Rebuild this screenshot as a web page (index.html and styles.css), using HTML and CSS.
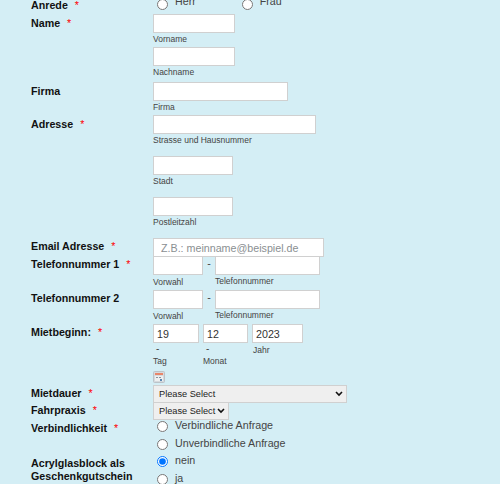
FILE: index.html
```html
<!DOCTYPE html>
<html lang="de">
<head>
    <meta charset="UTF-8">
    <title>Anfrage</title>
    <link rel="stylesheet" href="styles.css">
</head>
<body>
    <form class="form">
        <div class="row row-anrede">
            <div class="label">Anrede <span class="req">*</span></div>
            <div class="field radio-inline">
                <label class="radio"><input type="radio" name="anrede"><span>Herr</span></label>
                <label class="radio"><input type="radio" name="anrede"><span>Frau</span></label>
            </div>
        </div>

        <div class="row row-name">
            <div class="label">Name <span class="req">*</span></div>
            <div class="field">
                <div class="sub"><input type="text" class="text w82"><small>Vorname</small></div>
                <div class="sub"><input type="text" class="text w82"><small>Nachname</small></div>
            </div>
        </div>

        <div class="row row-firma">
            <div class="label">Firma</div>
            <div class="field">
                <div class="sub"><input type="text" class="text w135"><small>Firma</small></div>
            </div>
        </div>

        <div class="row row-adresse">
            <div class="label">Adresse <span class="req">*</span></div>
            <div class="field">
                <div class="sub addr"><input type="text" class="text w163"><small>Strasse und Hausnummer</small></div>
                <div class="sub addr"><input type="text" class="text w80"><small>Stadt</small></div>
                <div class="sub addr"><input type="text" class="text w80"><small>Postleitzahl</small></div>
            </div>
        </div>

        <div class="row row-email">
            <div class="label">Email Adresse <span class="req">*</span></div>
            <div class="field">
                <input type="text" class="text w171 email" placeholder="Z.B.: meinname@beispiel.de">
            </div>
        </div>

        <div class="row row-tel">
            <div class="label">Telefonnummer 1 <span class="req">*</span></div>
            <div class="field phone">
                <div class="sub"><input type="text" class="text w50"><small>Vorwahl</small></div>
                <div class="dash">-</div>
                <div class="sub sub-up"><input type="text" class="text w105"><small>Telefonnummer</small></div>
            </div>
        </div>

        <div class="row row-tel">
            <div class="label">Telefonnummer 2</div>
            <div class="field phone">
                <div class="sub"><input type="text" class="text w50"><small>Vorwahl</small></div>
                <div class="dash">-</div>
                <div class="sub sub-up"><input type="text" class="text w105"><small>Telefonnummer</small></div>
            </div>
        </div>

        <div class="row row-date">
            <div class="label">Mietbeginn: <span class="req">*</span></div>
            <div class="field">
                <div class="date">
                    <div class="date-part">
                        <input type="text" class="text w46" value="19">
                        <div class="date-dash">-</div>
                        <small>Tag</small>
                    </div>
                    <div class="date-part">
                        <input type="text" class="text w45" value="12">
                        <div class="date-dash">-</div>
                        <small>Monat</small>
                    </div>
                    <div class="date-part">
                        <input type="text" class="text w51" value="2023">
                        <small class="jahr">Jahr</small>
                    </div>
                </div>
                <svg class="cal" viewBox="0 0 12 12" width="12" height="12">
                    <rect x="0.5" y="0.5" width="11" height="11" rx="1" fill="#d5dade" stroke="#bcc3c8"/>
                    <rect x="2" y="2" width="8" height="2" fill="#e8866a"/>
                    <rect x="2" y="5" width="8" height="5" fill="#eef0f1"/>
                    <rect x="3" y="6" width="2" height="1" fill="#8a949c"/>
                    <rect x="6" y="6" width="2" height="1" fill="#8a949c"/>
                    <rect x="7" y="8" width="2" height="2" fill="#5a86b0"/>
                </svg>
            </div>
        </div>

        <div class="row row-select">
            <div class="label">Mietdauer <span class="req">*</span></div>
            <div class="field">
                <select class="select w194"><option>Please Select</option></select>
            </div>
        </div>

        <div class="row row-select">
            <div class="label">Fahrpraxis <span class="req">*</span></div>
            <div class="field">
                <select class="select w76"><option>Please Select</option></select>
            </div>
        </div>

        <div class="row row-radios">
            <div class="label">Verbindlichkeit <span class="req">*</span></div>
            <div class="field radio-stack">
                <label class="radio"><input type="radio" name="art"><span>Verbindliche Anfrage</span></label>
                <label class="radio"><input type="radio" name="art"><span>Unverbindliche Anfrage</span></label>
            </div>
        </div>

        <div class="row row-radios">
            <div class="label">Acrylglasblock als Geschenkgutschein (46.- CHF)</div>
            <div class="field radio-stack">
                <label class="radio"><input type="radio" name="block" checked><span>nein</span></label>
                <label class="radio"><input type="radio" name="block"><span>ja</span></label>
            </div>
        </div>
    </form>
</body>
</html>
```

FILE: styles.css
```css
html, body {
    height: 100%;
    overflow: hidden;
}

body {
    background-color: #d4eef5;
    color: #444;
    font-family: 'Liberation Sans', Arial, sans-serif;
    margin: 0;
}

.form {
    margin-top: -4px;
    padding-left: 31px;
}

.row {
    display: flex;
}

.label {
    color: #111;
    flex: 0 0 122px;
    font-size: 10.7px;
    font-weight: bold;
    line-height: 13px;
    padding-top: 2px;
    width: 122px;
}

.req {
    color: #f00;
    font-weight: normal;
    margin-left: 4px;
}

.field {
    flex: 1;
}

small {
    display: block;
    font-size: 8.5px;
    line-height: 11px;
}

.text {
    background: #fff;
    border: 1px solid #d0d0d0;
    box-sizing: border-box;
    color: #333;
    display: block;
    font-family: inherit;
    font-size: 10.7px;
    height: 19px;
    margin: 0;
    padding: 0 3px;
}

.w45 { width: 45px; }
.w46 { width: 46px; }
.w50 { width: 50px; }
.w51 { width: 51px; }
.w80 { width: 80px; }
.w82 { width: 82px; }
.w105 { width: 105px; }
.w135 { width: 135px; }
.w163 { width: 163px; }
.w171 { width: 171px; }
.w194 { width: 194px; }
.w76 { width: 76px; }

.email {
    padding-left: 7px;
}

.email::placeholder {
    color: #8a8f92;
    opacity: 1;
}

/* rows */
.row-anrede {
    height: 18px;
}

.row-anrede .label {
    padding-top: 3px;
}

.row-name {
    height: 68px;
}

.row-name .label,
.row-firma .label,
.row-adresse .label,
.row-radios .label {
    padding-top: 3px;
}

.row-name .sub {
    height: 33px;
}

.row-firma {
    height: 33px;
}

.row-adresse {
    height: 123px;
}

.addr {
    height: 41px;
}

.sub small {
    margin-top: 1px;
}

.row-email {
    height: 18px;
}

.row-tel {
    height: 34px;
}

.phone {
    display: flex;
}

.phone .sub small {
    margin-top: 2px;
}

.phone .sub-up small {
    margin-top: 1px;
}

.dash {
    font-size: 10.7px;
    line-height: 14px;
    text-align: center;
    width: 12px;
}

.row-date {
    height: 61px;
}

.date {
    display: flex;
    gap: 4px;
}

.date-dash {
    font-size: 10px;
    height: 13px;
    line-height: 12px;
    padding-left: 3px;
}

.jahr {
    margin-top: 2px;
    padding-left: 1px;
}

.cal {
    display: block;
    margin-top: 4px;
}

.row-select {
    height: 17px;
}

.select {
    appearance: none;
    background: #efefef url("data:image/svg+xml,%3Csvg xmlns='http://www.w3.org/2000/svg' width='8' height='6'%3E%3Cpath d='M1 1l3 3 3-3' fill='none' stroke='%23111' stroke-width='1.6'/%3E%3C/svg%3E") no-repeat right 3px center;
    border: 1px solid #d0d0d0;
    border-radius: 0;
    box-sizing: border-box;
    color: #222;
    display: block;
    font-family: inherit;
    font-size: 9.2px;
    height: 18px;
    margin: 0;
    padding: 0 0 0 5px;
}

.radio {
    align-items: flex-start;
    display: flex;
    font-size: 10.7px;
    height: 17.5px;
    line-height: 13px;
}

.radio input {
    flex: none;
    height: 11px;
    margin: 2px 7px 0 4px;
    width: 11px;
}

.radio-inline {
    display: flex;
    gap: 42px;
}

.row-anrede .radio input {
    margin-top: 3px;
}

.row-anrede .radio span {
    margin-top: -1px;
}

.row-radios {
    min-height: 35px;
}
```
